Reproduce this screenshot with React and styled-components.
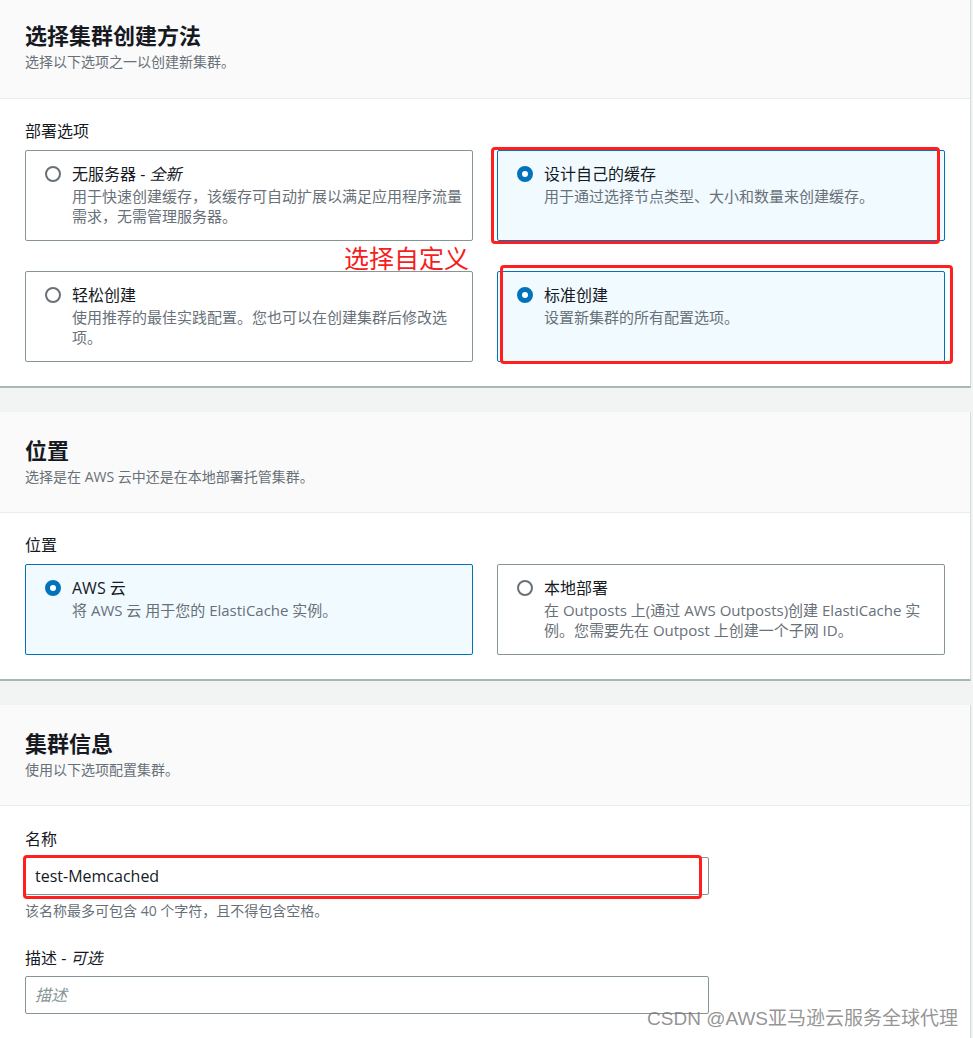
import React from "react";
import styled, { createGlobalStyle } from "styled-components";

const GlobalStyle = createGlobalStyle`
  html, body {
    margin: 0;
    padding: 0;
    background: #f2f3f3;
  }
  body {
    font-family: "Open Sans", "Noto Sans CJK SC", sans-serif;
    color: #16191f;
  }
  * {
    box-sizing: border-box;
  }
`;

const Page = styled.div`
  position: relative;
  height: 1038px;
  overflow: hidden;
  display: flex;
  flex-direction: column;
  gap: 24px;
`;

const Panel = styled.section`
  width: 971px;
  background: #ffffff;
  border-right: 1px solid #d5dbdb;
  border-bottom: 2px solid #aab7b8;
`;

const Header = styled.div`
  background: #fafafa;
  border-bottom: 1px solid #eaeded;
  padding: ${(p) => (p.$first ? "20px 25px 26px" : "23px 25px 25px")};
`;

const Title = styled.h2`
  margin: 0;
  font-size: 22px;
  line-height: 30px;
  font-weight: 700;
  color: #16191f;
`;

const Subtitle = styled.p`
  margin: 2px 0 0;
  font-size: 14px;
  line-height: 20px;
  color: #687078;
`;

const Body = styled.div`
  padding: ${(p) => p.$top || 21}px 25px ${(p) => p.$bottom || 24}px;
`;

const Label = styled.div`
  font-size: 16px;
  line-height: 22px;
  color: #16191f;
  margin-bottom: ${(p) => p.$gap || 8}px;

  em {
    font-style: italic;
  }
`;

const OptionGrid = styled.div`
  position: relative;
  display: grid;
  grid-template-columns: 448px 448px;
  column-gap: 24px;
  row-gap: 30px;
`;

const Card = styled.div`
  min-height: 91px;
  display: flex;
  align-items: flex-start;
  gap: 11px;
  padding: 13px 10px 13px 19px;
  border: 1px solid ${(p) => (p.$selected ? "#0073bb" : "#879596")};
  border-radius: 2px;
  background: ${(p) => (p.$selected ? "#f1faff" : "#ffffff")};
`;

const Radio = styled.span`
  flex: none;
  width: 16px;
  height: 16px;
  margin-top: 2px;
  border-radius: 50%;
  background: #ffffff;
  border: ${(p) => (p.$checked ? "5px solid #0073bb" : "2px solid #687078")};
`;

const CardText = styled.div`
  flex: 1;
  display: flex;
  flex-direction: column;
  gap: 2px;
`;

const CardLabel = styled.div`
  font-size: 16px;
  line-height: 20px;
  color: #16191f;

  em {
    font-style: italic;
  }
`;

const CardDesc = styled.div`
  font-size: 15px;
  line-height: 20px;
  color: #687078;
`;

const RedBox = styled.div`
  position: absolute;
  pointer-events: none;
  border: 3px solid #ff1f1f;
  border-radius: 4px;
`;

const Note = styled.div`
  position: absolute;
  left: 319px;
  top: 93px;
  font-size: 25px;
  line-height: 28px;
  color: #f51d1d;
  font-family: "Noto Sans CJK SC", sans-serif;
  white-space: nowrap;
`;

const Field = styled.div`
  margin-bottom: 26px;
`;

const InputWrap = styled.div`
  position: relative;
  width: 684px;
`;

const TextInput = styled.input`
  display: block;
  width: 684px;
  height: 38px;
  padding: 0 9px;
  border: 1px solid #879596;
  border-radius: 2px;
  background: #ffffff;
  font-family: "Open Sans", "Noto Sans CJK SC", sans-serif;
  font-size: 16px;
  color: #16191f;
  outline: none;

  &::placeholder {
    color: #879596;
    font-style: italic;
  }
`;

const Hint = styled.div`
  margin-top: 6px;
  font-size: 14px;
  line-height: 20px;
  color: #687078;
`;

const Watermark = styled.div`
  position: absolute;
  right: 15px;
  bottom: 7px;
  font-family: "Liberation Sans", "Noto Sans CJK SC", sans-serif;
  font-size: 19px;
  line-height: 24px;
  color: rgba(120, 120, 120, 0.8);
  white-space: nowrap;
`;

function Option({ checked, label, desc }) {
  return (
    <Card $selected={checked}>
      <Radio $checked={checked} />
      <CardText>
        <CardLabel>{label}</CardLabel>
        <CardDesc>{desc}</CardDesc>
      </CardText>
    </Card>
  );
}

export default function App() {
  return (
    <>
      <GlobalStyle />
      <Page>
        <Panel>
          <Header $first>
            <Title>选择集群创建方法</Title>
            <Subtitle>选择以下选项之一以创建新集群。</Subtitle>
          </Header>
          <Body>
            <Label>部署选项</Label>
            <OptionGrid>
              <Option
                label={
                  <>
                    无服务器 - <em>全新</em>
                  </>
                }
                desc="用于快速创建缓存，该缓存可自动扩展以满足应用程序流量需求，无需管理服务器。"
              />
              <Option
                checked
                label="设计自己的缓存"
                desc="用于通过选择节点类型、大小和数量来创建缓存。"
              />
              <Option
                label="轻松创建"
                desc="使用推荐的最佳实践配置。您也可以在创建集群后修改选项。"
              />
              <Option checked label="标准创建" desc="设置新集群的所有配置选项。" />
              <RedBox style={{ left: 466, top: -3, width: 449, height: 97 }} />
              <RedBox style={{ left: 475, top: 115, width: 453, height: 99 }} />
              <Note>选择自定义</Note>
            </OptionGrid>
          </Body>
        </Panel>

        <Panel>
          <Header>
            <Title>位置</Title>
            <Subtitle>选择是在 AWS 云中还是在本地部署托管集群。</Subtitle>
          </Header>
          <Body>
            <Label>位置</Label>
            <OptionGrid>
              <Option
                checked
                label="AWS 云"
                desc="将 AWS 云 用于您的 ElastiCache 实例。"
              />
              <Option
                label="本地部署"
                desc="在 Outposts 上(通过 AWS Outposts)创建 ElastiCache 实例。您需要先在 Outpost 上创建一个子网 ID。"
              />
            </OptionGrid>
          </Body>
        </Panel>

        <Panel>
          <Header>
            <Title>集群信息</Title>
            <Subtitle>使用以下选项配置集群。</Subtitle>
          </Header>
          <Body $top={22} $bottom={60}>
            <Field>
              <Label $gap={7}>名称</Label>
              <InputWrap>
                <TextInput readOnly defaultValue="test-Memcached" />
                <RedBox style={{ left: -2, top: -2, width: 679, height: 44 }} />
              </InputWrap>
              <Hint>该名称最多可包含 40 个字符，且不得包含空格。</Hint>
            </Field>
            <Field>
              <Label $gap={7}>
                描述 - <em>可选</em>
              </Label>
              <InputWrap>
                <TextInput readOnly placeholder="描述" />
              </InputWrap>
            </Field>
          </Body>
        </Panel>
        <Watermark>CSDN @AWS亚马逊云服务全球代理</Watermark>
      </Page>
    </>
  );
}
